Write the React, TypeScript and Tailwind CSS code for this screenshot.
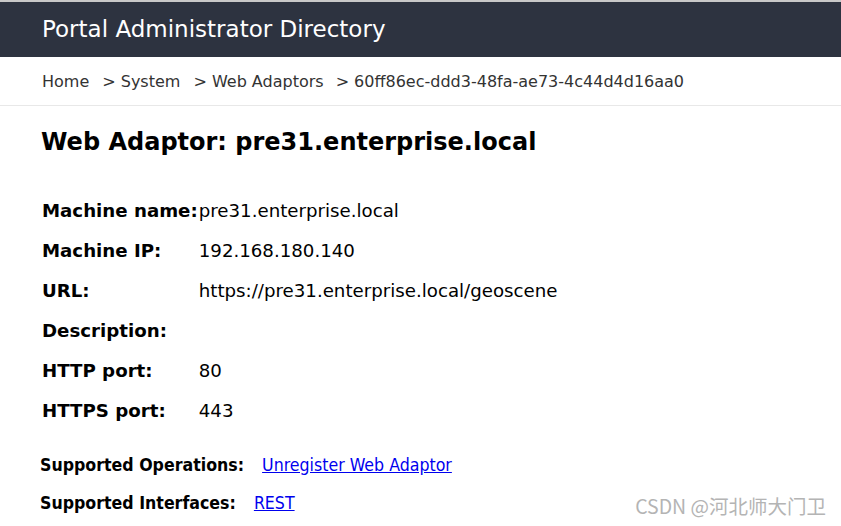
import React from 'react';

const rows: [string, string][] = [
  ['Machine name:', 'pre31.enterprise.local'],
  ['Machine IP:', '192.168.180.140'],
  ['URL:', 'https://pre31.enterprise.local/geoscene'],
  ['Description:', ''],
  ['HTTP port:', '80'],
  ['HTTPS port:', '443'],
];

export default function App() {
  return (
    <div
      className="relative w-[841px] h-[526px] overflow-hidden bg-white border-t-2 border-[#c8c8c8]"
      style={{ fontFamily: '"DejaVu Sans", Verdana, sans-serif' }}
    >
      {/* Header */}
      <header className="h-[55px] bg-[#2d3340] flex items-center px-[42px]">
        <h1 className="text-[23px] text-white font-normal">Portal Administrator Directory</h1>
      </header>

      {/* Breadcrumb */}
      <nav className="h-[49px] pt-[2px] flex items-center px-[42px] border-b border-[#e8e8e8] text-[16px] text-[#333]">
        <span>Home</span>
        <span className="ml-[13px]">&gt; System</span>
        <span className="ml-[13px]">&gt; Web Adaptors</span>
        <span className="ml-[12px]">&gt; 60ff86ec-ddd3-48fa-ae73-4c44d4d16aa0</span>
      </nav>

      <main className="px-[41px]">
        <h2 className="mt-[21px] text-[24px] font-bold text-black leading-[30px]">
          Web Adaptor: pre31.enterprise.local
        </h2>

        <table className="mt-[34px] ml-[1px] text-[18.2px] text-black">
          <tbody>
            {rows.map(([label, value]) => (
              <tr key={label} className="h-[40px]">
                <td className="font-bold pr-[1px] whitespace-nowrap">{label}</td>
                <td>{value}</td>
              </tr>
            ))}
          </tbody>
        </table>

        <div
          className="mt-[15px] -ml-[1px] text-[17.6px] text-black"
          style={{ fontFamily: '"DejaVu Sans Condensed", "Liberation Sans Narrow", sans-serif' }}
        >
          <div className="h-[38px] flex items-center">
            <span className="font-bold">Supported Operations:</span>
            <a href="#" className="ml-[18px] text-[#0000ee] underline">Unregister Web Adaptor</a>
          </div>
          <div className="h-[38px] flex items-center">
            <span className="font-bold">Supported Interfaces:</span>
            <a href="#" className="ml-[18px] text-[#0000ee] underline">REST</a>
          </div>
        </div>
      </main>

      {/* watermark */}
      <div
        className="absolute right-[15px] bottom-[6px] text-[19.5px] text-[#b4b4b4]"
        style={{ fontFamily: '"Liberation Sans Narrow", "Noto Sans CJK SC", sans-serif' }}
      >
        CSDN @河北师大门卫
      </div>
    </div>
  );
}
